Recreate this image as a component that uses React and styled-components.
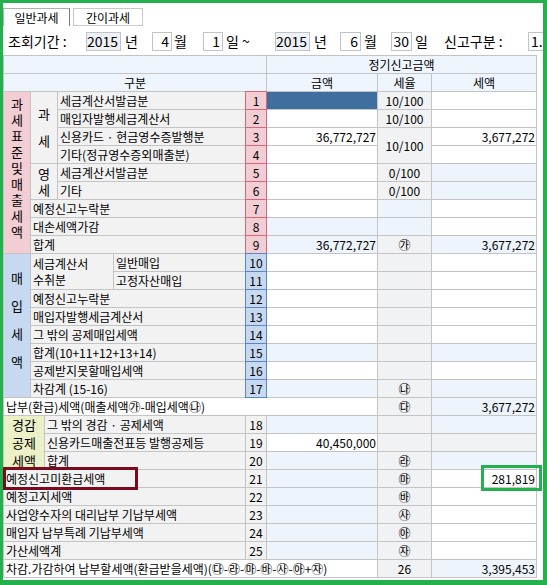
import React from 'react';
import styled, { createGlobalStyle } from 'styled-components';

const C = {
  line: '#c4c4c4',
  head: '#eef5fd',
  label: '#f2f2f2',
  white: '#ffffff',
  tint: '#edf4fc',
  rate: '#f1f2f4',
  pink: '#f2cdd4',
  pinkLine: '#d2677d',
  blue: '#c6d9f1',
  blueLine: '#5b86c5',
  olive: '#ebf0c6',
  sel: '#3e6f9e',
};

const GlobalStyle = createGlobalStyle`
  html, body {
    margin: 0;
    padding: 0;
    background: #fff;
  }
  body {
    font-family: "Noto Sans CJK KR", "Liberation Sans", sans-serif;
    color: #000;
  }
`;

const Frame = styled.div`
  position: relative;
  width: 547px;
  height: 585px;
  box-sizing: border-box;
  border: solid #22b14c;
  border-width: 3px 4px 5px 3px;
  background: #fff;
  overflow: hidden;
`;

const TabBar = styled.div`
  display: flex;
  gap: 3px;
  padding-top: 5px;
  height: 18px;
`;

const Tab = styled.div`
  box-sizing: border-box;
  width: ${p => p.$w}px;
  height: 18px;
  display: flex;
  align-items: center;
  justify-content: center;
  font-size: 12px;
  background: #fff;
  border: 1px solid #c8c8c8;
  ${p => p.$active && `
    border-color: #b0b0b0;
    border-right-color: #7a7a7a;
    border-bottom: none;
  `}
`;

const QueryRow = styled.div`
  display: flex;
  align-items: center;
  height: 22px;
  margin-top: 4px;
  padding-left: 5px;
  font-size: 14px;
  white-space: nowrap;
`;

const Word = styled.span`
  flex-shrink: 0;
  width: ${p => p.$w}px;
  padding-left: ${p => p.$pl || 0}px;
  box-sizing: border-box;
`;

const Box = styled.div`
  flex-shrink: 0;
  box-sizing: border-box;
  width: ${p => p.$w}px;
  height: 19px;
  border: 1px solid #bcc4cc;
  background: ${p => (p.$shade ? '#eef2f7' : '#fff')};
  display: flex;
  align-items: center;
  justify-content: ${p => (p.$left ? 'flex-start' : 'flex-end')};
  padding: 0 2px;
  font-size: 14px;
`;

const Grid = styled.div`
  display: grid;
  grid-template-columns: 26px 13px 12px 55px 131px 20px 110px 53px 104px;
  grid-template-rows: repeat(29, 17px);
  gap: 1px;
  padding: 1px;
  width: max-content;
  margin-top: 3px;
  background: ${C.line};
  font-size: 12px;
`;

const Cell = styled.div`
  grid-column: ${p => p.$c};
  grid-row: ${p => p.$r};
  background: ${p => p.$bg || C.white};
  display: flex;
  align-items: center;
  justify-content: ${p =>
    p.$align === 'right' ? 'flex-end' : p.$align === 'center' ? 'center' : 'flex-start'};
  padding: 0 ${p => (p.$align === 'right' ? '1px' : '2px')};
  line-height: 17px;
  white-space: nowrap;
  overflow: hidden;
`;

const NoCell = styled(Cell)`
  position: relative;
  z-index: 1;
  justify-content: center;
  padding: 0;
  box-shadow: ${p => (p.$line ? `0 0 0 1px ${p.$line}` : 'none')};
`;

const Category = styled.div`
  grid-column: ${p => p.$c};
  grid-row: ${p => p.$r};
  background: ${p => p.$bg};
  display: flex;
  flex-direction: column;
  align-items: center;
  justify-content: ${p => (p.$top ? 'flex-start' : 'center')};
  padding-top: ${p => p.$top || 0}px;
  gap: ${p => p.$gap || 0}px;
  line-height: ${p => p.$lh || 16}px;
  font-size: ${p => p.$fs || 13}px;
`;

const Stack = styled.div`
  grid-column: ${p => p.$c};
  grid-row: ${p => p.$r};
  background: ${C.label};
  display: flex;
  flex-direction: column;
  justify-content: center;
  padding: 0 2px;
  line-height: 16px;
`;

const Mark = styled.div`
  position: absolute;
  left: ${p => p.$x}px;
  top: ${p => p.$y}px;
  width: ${p => p.$w}px;
  height: ${p => p.$h}px;
  box-sizing: border-box;
  border: 3px solid ${p => p.$color};
  pointer-events: none;
`;

const tones = {
  pink: [C.pink, C.pinkLine],
  blue: [C.blue, C.blueLine],
  gray: [C.label, null],
};

// 금액 / 세율 / 세액 per body row, top to bottom
const rows = [
  { no: '1', tone: 'pink', amt: [C.sel], rate: [C.rate, '10/100'], tax: [C.white] },
  { no: '2', tone: 'pink', amt: [C.white], rate: [C.rate, '10/100'], tax: [C.white] },
  { no: '3', tone: 'pink', amt: [C.white, '36,772,727'], rate: [C.rate, '10/100', 2], tax: [C.white, '3,677,272'] },
  { no: '4', tone: 'pink', amt: [C.white], tax: [C.white] },
  { no: '5', tone: 'pink', amt: [C.white], rate: [C.rate, '0/100'], tax: [C.tint] },
  { no: '6', tone: 'pink', amt: [C.white], rate: [C.rate, '0/100'], tax: [C.tint] },
  { no: '7', tone: 'pink', amt: [C.white], rate: [C.tint], tax: [C.white] },
  { no: '8', tone: 'pink', amt: [C.tint], rate: [C.tint], tax: [C.white] },
  { no: '9', tone: 'pink', amt: [C.tint, '36,772,727'], rate: [C.rate, '㉮'], tax: [C.tint, '3,677,272'] },
  { no: '10', tone: 'blue', amt: [C.white], rate: [C.rate], tax: [C.white] },
  { no: '11', tone: 'blue', amt: [C.white], rate: [C.rate], tax: [C.white] },
  { no: '12', tone: 'blue', amt: [C.white], rate: [C.rate], tax: [C.white] },
  { no: '13', tone: 'blue', amt: [C.white], rate: [C.rate], tax: [C.white] },
  { no: '14', tone: 'blue', amt: [C.white], rate: [C.rate], tax: [C.white] },
  { no: '15', tone: 'blue', amt: [C.tint], rate: [C.rate], tax: [C.tint] },
  { no: '16', tone: 'blue', amt: [C.white], rate: [C.rate], tax: [C.white] },
  { no: '17', tone: 'blue', amt: [C.tint], rate: [C.rate, '㉯'], tax: [C.tint] },
  { rate: [C.rate, '㉰'], tax: [C.tint, '3,677,272'] },
  { no: '18', tone: 'gray', amt: [C.tint], rate: [C.rate], tax: [C.tint] },
  { no: '19', tone: 'gray', amt: [C.white, '40,450,000'], rate: [C.rate], tax: [C.rate] },
  { no: '20', tone: 'gray', amt: [C.tint], rate: [C.rate, '㉱'], tax: [C.tint] },
  { no: '21', tone: 'gray', amt: [C.tint], rate: [C.rate, '㉲'], tax: [C.white, '281,819'] },
  { no: '22', tone: 'gray', amt: [C.tint], rate: [C.rate, '㉳'], tax: [C.white] },
  { no: '23', tone: 'gray', amt: [C.tint], rate: [C.rate, '㉴'], tax: [C.white] },
  { no: '24', tone: 'gray', amt: [C.tint], rate: [C.rate, '㉵'], tax: [C.white] },
  { no: '25', tone: 'gray', amt: [C.tint], rate: [C.rate, '㉶'], tax: [C.white] },
  { rate: [C.rate, '26'], tax: [C.tint, '3,395,453'] },
];

// [columns, grid row, text, background]
const labels = [
  ['4 / 6', 3, '세금계산서발급분'],
  ['4 / 6', 4, '매입자발행세금계산서'],
  ['4 / 6', 5, '신용카드 · 현금영수증발행분'],
  ['4 / 6', 6, '기타(정규영수증외매출분)'],
  ['4 / 6', 7, '세금계산서발급분'],
  ['4 / 6', 8, '기타'],
  ['2 / 6', 9, '예정신고누락분'],
  ['2 / 6', 10, '대손세액가감'],
  ['2 / 6', 11, '합계'],
  ['5 / 6', 12, '일반매입'],
  ['5 / 6', 13, '고정자산매입'],
  ['2 / 6', 14, '예정신고누락분'],
  ['2 / 6', 15, '매입자발행세금계산서'],
  ['2 / 6', 16, '그 밖의 공제매입세액'],
  ['2 / 6', 17, '합계(10+11+12+13+14)'],
  ['2 / 6', 18, '공제받지못할매입세액'],
  ['2 / 6', 19, '차감계 (15-16)'],
  ['1 / 8', 20, '납부(환급)세액(매출세액㉮-매입세액㉯)', C.white],
  ['3 / 6', 21, '그 밖의 경감 · 공제세액'],
  ['3 / 6', 22, '신용카드매출전표등 발행공제등'],
  ['3 / 6', 23, '합계'],
  ['1 / 6', 24, '예정신고미환급세액'],
  ['1 / 6', 25, '예정고지세액'],
  ['1 / 6', 26, '사업양수자의 대리납부 기납부세액'],
  ['1 / 6', 27, '매입자 납부특례 기납부세액'],
  ['1 / 6', 28, '가산세액계'],
  ['1 / 8', 29, '차감.가감하여 납부할세액(환급받을세액)(㉰-㉱-㉲-㉳-㉴-㉵+㉶)', C.white],
];

const vertical = text => text.split('').map((ch, i) => <span key={i}>{ch}</span>);

export default function App() {
  return (
    <Frame>
      <GlobalStyle />
      <TabBar>
        <Tab $w={67} $active>일반과세</Tab>
        <Tab $w={70}>간이과세</Tab>
      </TabBar>

      <QueryRow>
        <Word $w={78}>조회기간 :</Word>
        <Box $w={35} $shade>2015</Box>
        <Word $w={31} $pl={4}>년</Word>
        <Box $w={20}>4</Box>
        <Word $w={31} $pl={2}>월</Word>
        <Box $w={20}>1</Box>
        <Word $w={52} $pl={3}>일 ~</Word>
        <Box $w={35} $shade>2015</Box>
        <Word $w={30} $pl={4}>년</Word>
        <Box $w={21}>6</Box>
        <Word $w={30} $pl={3}>월</Word>
        <Box $w={21}>30</Box>
        <Word $w={32} $pl={3}>일</Word>
        <Word $w={84}>신고구분 :</Word>
        <Box $w={40} $left>1.</Box>
      </QueryRow>

      <Grid>
        <Cell $c="1 / 7" $r={1} $bg={C.head} />
        <Cell $c="1 / 7" $r={2} $bg={C.head} $align="center">구분</Cell>
        <Cell $c="7 / 10" $r={1} $bg={C.head} $align="center">정기신고금액</Cell>
        <Cell $c="7 / 8" $r={2} $bg={C.head} $align="center">금액</Cell>
        <Cell $c="8 / 9" $r={2} $bg={C.head} $align="center">세율</Cell>
        <Cell $c="9 / 10" $r={2} $bg={C.head} $align="center">세액</Cell>

        <Category $c="1 / 2" $r="3 / 12" $bg={C.pink} $top={4}>
          {vertical('과세표준및매출세액')}
        </Category>
        <Category $c="2 / 4" $r="3 / 7" $bg={C.label} $gap={11}>
          {vertical('과세')}
        </Category>
        <Category $c="2 / 4" $r="7 / 9" $bg={C.label}>
          {vertical('영세')}
        </Category>
        <Category $c="1 / 2" $r="12 / 20" $bg={C.blue} $top={16} $gap={12}>
          {vertical('매입세액')}
        </Category>
        <Category $c="1 / 3" $r="21 / 24" $bg={C.olive} $lh={18}>
          <span>경감</span>
          <span>공제</span>
          <span>세액</span>
        </Category>
        <Stack $c="2 / 5" $r="12 / 14">
          <span>세금계산서</span>
          <span>수취분</span>
        </Stack>

        {labels.map(([c, r, text, bg]) => (
          <Cell key={r + c} $c={c} $r={r} $bg={bg || C.label}>{text}</Cell>
        ))}

        {rows.map((row, i) => {
          const r = i + 3;
          const [bg, line] = row.tone ? tones[row.tone] : [];
          return (
            <React.Fragment key={r}>
              {row.no && <NoCell $c="6 / 7" $r={r} $bg={bg} $line={line}>{row.no}</NoCell>}
              {row.amt && <Cell $c="7 / 8" $r={r} $bg={row.amt[0]} $align="right">{row.amt[1]}</Cell>}
              {row.rate && (
                <Cell $c="8 / 9" $r={row.rate[2] ? `${r} / span ${row.rate[2]}` : r} $bg={row.rate[0]} $align="center">
                  {row.rate[1]}
                </Cell>
              )}
              <Cell $c="9 / 10" $r={r} $bg={row.tax[0]} $align="right">{row.tax[1]}</Cell>
            </React.Fragment>
          );
        })}
      </Grid>

      <Mark $x={0} $y={464} $w={135} $h={23} $color="#7b0a1e" />
      <Mark $x={478} $y={462} $w={61} $h={26} $color="#22b14c" />
    </Frame>
  );
}
